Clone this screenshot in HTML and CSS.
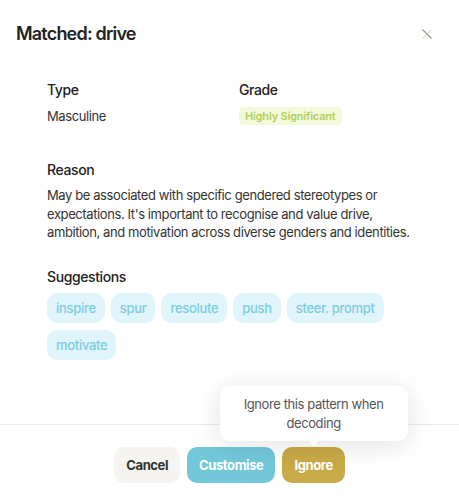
FILE: index.html
```html
<!DOCTYPE html>
<html lang="en">
<head>
<meta charset="utf-8">
<link rel="stylesheet" href="styles.css">
</head>
<body>
<div class="modal">
  <header class="header">
    <h1 class="title">Matched: drive</h1>
    <button class="close" aria-label="Close">
      <svg width="10" height="10" viewBox="0 0 10 10">
        <line x1="0.8" y1="9.2" x2="9.2" y2="0.8" stroke="#dcdcd8" stroke-width="1.2" stroke-linecap="round"/>
        <line x1="0.8" y1="0.8" x2="9.2" y2="9.2" stroke="#958c7c" stroke-width="1.2" stroke-linecap="round"/>
      </svg>
    </button>
  </header>
  <main class="content">
    <div class="meta">
      <div class="field">
        <div class="label">Type</div>
        <div class="value">Masculine</div>
      </div>
      <div class="field">
        <div class="label">Grade</div>
        <div class="value"><span class="badge">Highly Significant</span></div>
      </div>
    </div>
    <section class="section">
      <div class="label">Reason</div>
      <p class="reason">May be associated with specific gendered stereotypes or expectations. It's important to recognise and value drive, ambition, and motivation across diverse genders and identities.</p>
    </section>
    <section class="section">
      <div class="label">Suggestions</div>
      <div class="chips">
        <span class="chip">inspire</span>
        <span class="chip">spur</span>
        <span class="chip">resolute</span>
        <span class="chip">push</span>
        <span class="chip">steer. prompt</span>
        <span class="chip">motivate</span>
      </div>
    </section>
  </main>
  <footer class="footer">
    <button class="btn btn-cancel">Cancel</button>
    <button class="btn btn-customise">Customise</button>
    <div class="tip-wrap">
      <button class="btn btn-ignore">Ignore</button>
      <div class="tooltip">Ignore this pattern when decoding</div>
    </div>
  </footer>
</div>
</body>
</html>
```
FILE: styles.css
```css
* { box-sizing: border-box; }
html, body { margin: 0; padding: 0; background: #fff; }
body {
  font-family: Inter, "Noto Sans", "Liberation Sans", sans-serif;
  color: #2a2a2a;
  letter-spacing: -0.4px;
}
.modal {
  width: 459px;
  height: 500px;
  display: flex;
  flex-direction: column;
}
.header {
  display: flex;
  align-items: center;
  justify-content: space-between;
  padding: 22px 27px 0 16px;
  height: 46px;
}
.title {
  margin: 0;
  font-size: 18px;
  font-weight: 600;
  line-height: 24px;
  color: #222;
  letter-spacing: -0.8px;
}
.close {
  border: 0;
  background: none;
  padding: 0;
  width: 10px;
  height: 10px;
  display: flex;
}
.content {
  flex: 1;
  padding: 34px 47px 0 47px;
}
.meta {
  display: grid;
  grid-template-columns: 192px 1fr;
}
.label {
  font-size: 14px;
  line-height: 20px;
  font-weight: 500;
  color: #222;
}
.value {
  margin-top: 7px;
  font-size: 13px;
  line-height: 18px;
  color: #333;
  display: flex;
  align-items: center;
  height: 18px;
}
.badge {
  display: inline-block;
  background: #f3f9dc;
  color: #b3d159;
  font-size: 11px;
  font-weight: 600;
  line-height: 18px;
  padding: 0 6px;
  border-radius: 5px;
  letter-spacing: -0.2px;
}
.section { margin-top: 35px; }
.section + .section { margin-top: 25px; }
.reason {
  margin: 6px 0 0 0;
  font-size: 13px;
  line-height: 18.5px;
  color: #333;
}
.chips {
  margin-top: 6px;
  display: flex;
  flex-wrap: wrap;
  gap: 7px 6px;
}
.chip {
  height: 30px;
  line-height: 30px;
  padding: 0 9px;
  background: #dff5fb;
  color: #7ccde0;
  font-size: 13px;
  font-weight: 500;
  border-radius: 10px;
  letter-spacing: -0.3px;
}
.footer {
  border-top: 1px solid #ececec;
  padding: 22px 0 17px;
  display: flex;
  justify-content: center;
  gap: 7px;
}
.btn {
  height: 36px;
  border: 0;
  border-radius: 10px;
  padding: 0 12px;
  font-family: inherit;
  font-size: 13px;
  font-weight: 700;
  letter-spacing: -0.4px;
  cursor: pointer;
}
.btn-cancel { background: #f5f4f0; color: #333; }
.btn-customise { background: #72c8d9; color: #fff; }
.btn-ignore { background: #c8aa46; color: #fff; }
.tip-wrap { position: relative; display: flex; }
.tooltip {
  position: absolute;
  bottom: calc(100% + 6px);
  left: 50%;
  transform: translateX(-50%);
  width: 188px;
  padding: 9px 14px 9px;
  background: #fff;
  border-radius: 10px;
  box-shadow: 0 4px 28px rgba(0, 0, 0, 0.12);
  font-size: 13px;
  line-height: 18.5px;
  color: #555;
  text-align: center;
}
.tooltip::after {
  content: "";
  position: absolute;
  left: 50%;
  top: 100%;
  margin-left: -5px;
  border: 5px solid transparent;
  border-top-color: #fff;
  border-bottom: 0;
}
```
